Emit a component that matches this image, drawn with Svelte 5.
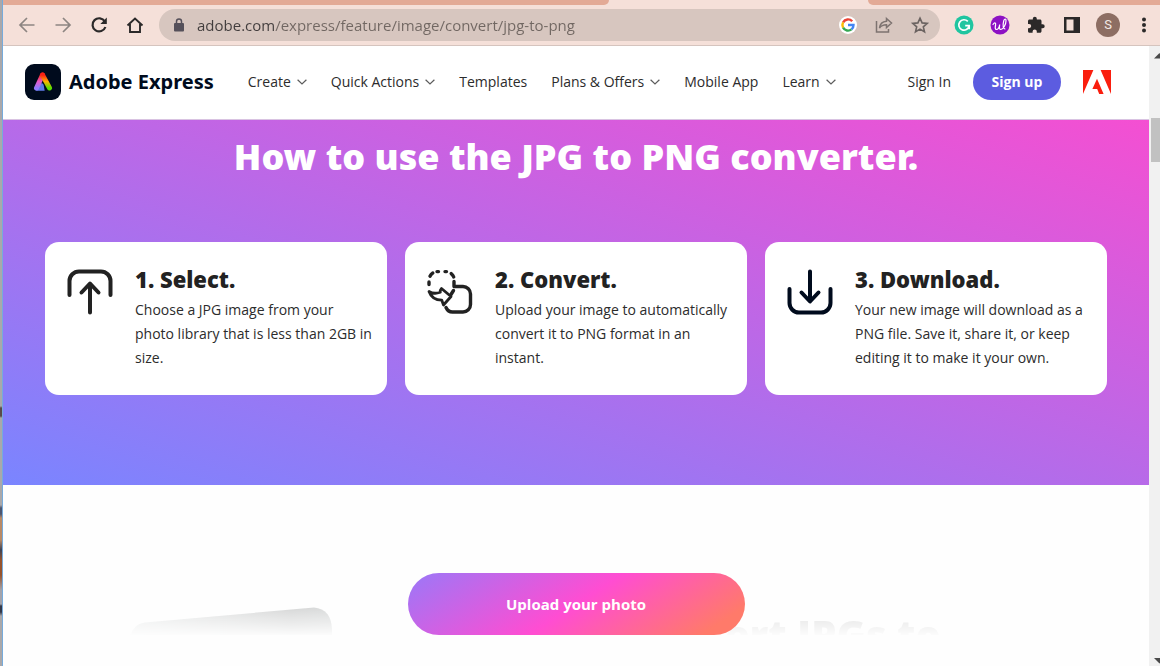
<script lang="ts">
  interface NavItem {
    label: string;
    menu?: boolean;
  }

  interface Step {
    icon: 'select' | 'convert' | 'download';
    title: string;
    text: string;
  }

  const nav: NavItem[] = [
    { label: 'Create', menu: true },
    { label: 'Quick Actions', menu: true },
    { label: 'Templates' },
    { label: 'Plans & Offers', menu: true },
    { label: 'Mobile App' },
    { label: 'Learn', menu: true },
  ];

  const steps: Step[] = [
    {
      icon: 'select',
      title: '1. Select.',
      text: 'Choose a JPG image from your photo library that is less than 2GB in size.',
    },
    {
      icon: 'convert',
      title: '2. Convert.',
      text: 'Upload your image to automatically convert it to PNG format in an instant.',
    },
    {
      icon: 'download',
      title: '3. Download.',
      text: 'Your new image will download as a PNG file. Save it, share it, or keep editing it to make it your own.',
    },
  ];

  let url = $state('adobe.com/express/feature/image/convert/jpg-to-png');
</script>

<div class="window">
  <div class="tabs"><span class="tab-left"></span><span class="tab-right"></span></div>

  <div class="toolbar">
    <button type="button" class="tool" aria-label="Back">
      <svg width="24" height="24" viewBox="0 0 24 24" fill="none" stroke="#8d8582" stroke-width="1.7">
        <path d="M19.500 12H5.500M12 5L5 12l7 7" />
      </svg>
    </button>
    <button type="button" class="tool" aria-label="Forward">
      <svg width="24" height="24" viewBox="0 0 24 24" fill="none" stroke="#8d8582" stroke-width="1.7">
        <path d="M4.500 12h14M12 5l7 7-7 7" />
      </svg>
    </button>
    <button type="button" class="tool" aria-label="Reload">
      <svg width="24" height="24" viewBox="0 0 24 24" fill="none" stroke="#2b2929" stroke-width="2.200">
        <path d="M17.800 8.400A6.600 6.600 0 1 0 18.400 14" />
        <path d="M19.800 4.500v6.500h-6.500z" fill="#2b2929" stroke="none" />
      </svg>
    </button>
    <button type="button" class="tool" aria-label="Home">
      <svg width="24" height="24" viewBox="0 0 24 24" fill="none" stroke="#2b2929" stroke-width="1.900">
        <path d="M4.500 12.500L12 5.500l7.500 7M7 11v8h10v-8" />
      </svg>
    </button>

    <div class="omnibox">
      <svg width="12" height="16" viewBox="0 0 12 16" aria-hidden="true">
        <path d="M3.500 7V4.500a2.500 2.500 0 0 1 5 0V7" fill="none" stroke="#55505a" stroke-width="1.500" />
        <rect x="1" y="6" width="10" height="8.500" rx="1" fill="#55505a" />
      </svg>
      <input type="text" class="url" aria-label="Address" spellcheck={false} bind:value={url} />
      <button type="button" class="tool" aria-label="Search with Google">
        <svg width="24" height="24" viewBox="0 0 24 24" fill="none" stroke-width="2.400">
          <circle cx="12" cy="12" r="9" fill="#fff" />
          <path d="M16.200 8.300A5.600 5.600 0 0 0 7.100 9.300" stroke="#ea4335" />
          <path d="M7.100 9.300a5.600 5.600 0 0 0 0 5.400" stroke="#fbbc05" />
          <path d="M7.100 14.700a5.600 5.600 0 0 0 8.400 1.700" stroke="#34a853" />
          <path d="M15.500 16.400a5.600 5.600 0 0 0 2-4.400H12" stroke="#4285f4" />
        </svg>
      </button>
      <button type="button" class="tool" aria-label="Share this page">
        <svg width="24" height="24" viewBox="0 0 24 24" fill="none" stroke="#7d7370" stroke-width="1.500">
          <path d="M4.500 8v11h12v-3" />
          <path d="M14.500 5.500l5 4.500-5 4.500v-2.700c-3.500 0-5.500 1-7 3.200.5-4 3-6.500 7-6.800z" />
        </svg>
      </button>
      <button type="button" class="tool" aria-label="Bookmark this page">
        <svg width="24" height="24" viewBox="0 0 24 24" fill="none" stroke="#6b6361" stroke-width="1.600">
          <path d="M12 5.200l2.100 4.700 5.100.5-3.900 3.400 1.200 5-4.500-2.700-4.500 2.700 1.200-5-3.900-3.400 5.100-.5z" />
        </svg>
      </button>
    </div>

    <button type="button" class="tool" aria-label="Grammarly">
      <svg width="24" height="24" viewBox="0 0 24 24" fill="none" stroke="#fff" stroke-width="1.700">
        <circle cx="12" cy="12" r="9.500" fill="#20c5a0" stroke="none" />
        <path d="M15.800 8.400a5.200 5.200 0 1 0 1.300 4.600M13.200 12.700h4v3.500" />
      </svg>
    </button>
    <button type="button" class="tool" aria-label="Wordtune">
      <svg width="24" height="24" viewBox="0 0 24 24" fill="none" stroke="#fff" stroke-width="1.200" stroke-linecap="round">
        <circle cx="12" cy="12" r="9.500" fill="#8d12c4" stroke="none" />
        <path d="M5 11.500c1.500-2.500 3-2 2.600.5-.6 2.500-.6 4.500.8 4.500 1.600 0 2.900-2.500 3.300-5-.5 2.800-.4 5 1.200 5 2.600 0 5.100-5.500 5.100-8.800 0-2.400-1.700-2.200-2.300.3-.7 3-1 7 1.200 8" />
      </svg>
    </button>
    <button type="button" class="tool" aria-label="Extensions">
      <svg width="24" height="24" viewBox="0 0 24 24" fill="#2b2929">
        <path d="M18.700 11.300h-1.200V8c0-.9-.7-1.500-1.500-1.500h-3.200V5.800a2 2 0 0 0-4 0v.7H5.500C4.700 6.500 4 7.100 4 8v3h1.100a2 2 0 0 1 0 4.200H4v3.100c0 .8.700 1.500 1.500 1.500h3.100v-1.200a2.100 2.100 0 0 1 4.200 0v1.200H16c.8 0 1.500-.7 1.500-1.500v-3h1.200a2 2 0 0 0 0-4z" />
      </svg>
    </button>
    <button type="button" class="tool" aria-label="Side panel">
      <svg width="24" height="24" viewBox="0 0 24 24" fill="#2b2929">
        <path d="M4 4h16v16H4zM6.500 6.500v11h7v-11z" fill-rule="evenodd" />
      </svg>
    </button>
    <button type="button" class="avatar" aria-label="Profile">S</button>
    <button type="button" class="tool" aria-label="Browser menu">
      <svg width="24" height="24" viewBox="0 0 24 24" fill="#2b2929">
        <circle cx="12" cy="6.500" r="2" /><circle cx="12" cy="12" r="2" /><circle cx="12" cy="17.500" r="2" />
      </svg>
    </button>
  </div>

  <div class="viewport">
    <div class="page">
      <header>
        <a class="brand" href="#home">
          <svg width="36" height="36" viewBox="0 0 36 36" fill="none" stroke-linecap="round" aria-hidden="true">
            <defs>
              <linearGradient id="leg-left" x1="0" y1="0" x2="0" y2="1">
                <stop offset="0" stop-color="#fb2a1c" />
                <stop offset=".5" stop-color="#e558c8" />
                <stop offset="1" stop-color="#8f7bff" />
              </linearGradient>
              <linearGradient id="leg-right" x1="0" y1="0" x2="0" y2="1">
                <stop offset="0" stop-color="#fb2015" />
                <stop offset=".5" stop-color="#ffb000" />
                <stop offset="1" stop-color="#58e000" />
              </linearGradient>
            </defs>
            <rect width="36" height="36" rx="9" fill="#000b1d" />
            <path d="M12 24.500h5l-.5-3" stroke="#5d7be8" stroke-width="4.500" />
            <path d="M17.500 11L11.500 24" stroke="url(#leg-left)" stroke-width="5" />
            <path d="M17.500 11l7 13" stroke="url(#leg-right)" stroke-width="5" />
          </svg>
          <span>Adobe Express</span>
        </a>
        <nav>
          {#each nav as item}
            {#if item.menu}
              <button type="button" class="nav-item">
                {item.label}
                <svg width="10" height="6" viewBox="0 0 10 6" fill="none" stroke="#5c5c5c" stroke-width="1.200" aria-hidden="true">
                  <path d="M.6.700L5 5 9.400.700" />
                </svg>
              </button>
            {:else}
              <a class="nav-item" href="#{item.label}">{item.label}</a>
            {/if}
          {/each}
        </nav>
        <a class="nav-item sign-in" href="#sign-in">Sign In</a>
        <button type="button" class="sign-up">Sign up</button>
        <a class="adobe" href="#adobe" aria-label="Adobe">
          <svg width="28" height="24" viewBox="0 0 28 24" fill="#fa1e0e">
            <path d="M0 0h10.400L0 24zM17.600 0H28v24zM14 8.800L20.600 24h-4.400l-2-4.900H9.400z" />
          </svg>
        </a>
      </header>

      <section class="hero">
        <h1>How to use the JPG to PNG converter.</h1>
        <div class="steps">
          {#each steps as step}
            <article>
              <svg class="step-icon" width="46" height="46" viewBox="0 0 46 46" fill="none" stroke="#222" stroke-width="4" stroke-linecap="round" stroke-linejoin="round" aria-hidden="true">
                {#if step.icon === 'select'}
                  <path d="M2.500 26V12a9.500 9.500 0 0 1 9.500-9.500h22A9.500 9.500 0 0 1 43.500 12v14M23 43.500V15M14.500 23.500L23 14.500l8.500 9" />
                {:else if step.icon === 'convert'}
                  <path d="M2 15.500v-2.500M3 7.300Q4 5 5.800 4M10 2.600h1.500M18 2.600h1.500M24.200 4.600Q26 6 26.700 8M27 12.500v5h9a7.500 7.500 0 0 1 7.500 7.500v10.500a7.500 7.500 0 0 1-7.500 7.500H25.500q-4.500 0-6.500-4.500M26.500 21.500l-2.500 4" stroke-width="3.400" />
                  <path d="M14.500 19.500l9.500 8-7.500 8.500-1.700-4.800Q5 31 2 22.500q5 3 11.300.8-.6-2 1.200-3.800z" stroke-width="2.800" />
                {:else}
                  <path d="M2.500 20v14a9.500 9.500 0 0 0 9.500 9.500h22a9.500 9.500 0 0 0 9.500-9.500V20M23 2.500V31M14.500 23.500L23 32.500l8.500-9" stroke="#000b1d" />
                {/if}
              </svg>
              <div>
                <h2>{step.title}</h2>
                <p>{step.text}</p>
              </div>
            </article>
          {/each}
        </div>
      </section>

      <section class="upload">
        <div class="teaser">
          <svg width="202" height="30" viewBox="0 0 202 30" aria-hidden="true">
            <defs>
              <linearGradient id="sheet">
                <stop offset="0" stop-color="#ebeded" />
                <stop offset=".8" stop-color="#d0d1d1" />
                <stop offset="1" stop-color="#d4d6d6" />
              </linearGradient>
            </defs>
            <path d="M0 30Q3 17 15 15.500L184 .5Q201 2 202 22v8z" fill="url(#sheet)" />
          </svg>
          <h2>Convert JPGs to</h2>
        </div>
        <button type="button" class="upload-button">Upload your photo</button>
      </section>
    </div>

    <div class="scrollbar">
      <svg width="6" height="6" viewBox="0 0 6 6" fill="#4a4a4a" aria-hidden="true"><path d="M0 5.500L5.500 0 11 5.500z" /></svg>
      <span class="thumb"></span>
      <svg width="6" height="6" viewBox="0 0 6 6" fill="#4a4a4a" aria-hidden="true"><path d="M0 0h11L5.500 5.500z" /></svg>
    </div>
  </div>
</div>

<style>
  :global(body) {
    margin: 0;
    background: linear-gradient(
      #aaa8aa 0 406px,
      #5a4a48 408px 416px,
      #aaa8aa 418px 505px,
      #4c5670 508px 514px,
      #b98a66 518px 540px,
      #3d4254 550px,
      #96532c 560px 575px,
      #a3a3ab 590px 604px,
      #34394a 606px 612px,
      #aaa8aa 616px
    );
  }

  * {
    box-sizing: border-box;
  }

  button {
    border: 0;
    padding: 0;
    background: none;
    font: inherit;
    color: inherit;
    cursor: pointer;
  }

  a {
    color: inherit;
    text-decoration: none;
  }

  svg {
    display: block;
    flex-shrink: 0;
  }

  .window {
    display: flex;
    flex-direction: column;
    min-height: 100vh;
    margin-left: 2px;
    border-left: 1px solid #76abdc;
    background: #fff;
    color: #2c2c2c;
    font-family: 'Open Sans', 'Noto Sans', sans-serif;
  }

  .tabs {
    display: grid;
    grid-template-columns: 606fr 292fr;
    column-gap: 259px;
    height: 5px;
    background: #f5e0d9;
  }

  .tab-left,
  .tab-right {
    background: #e3aa96;
  }

  .tab-left {
    border-bottom-right-radius: 5px;
  }

  .tab-right {
    border-bottom-left-radius: 5px;
  }

  .toolbar {
    display: flex;
    align-items: center;
    gap: 12px;
    height: 41px;
    padding: 0 4px 0 12px;
    background: #f5e0d9;
    border-bottom: 1px solid #d5c4be;
  }

  .tool {
    flex: 0 0 24px;
    height: 24px;
  }

  .omnibox {
    flex: 1;
    display: flex;
    align-items: center;
    gap: 12px;
    min-width: 0;
    height: 32px;
    padding: 0 8px 0 14px;
    border-radius: 16px;
    background: #d7c6bf;
  }

  .url {
    flex: 1;
    min-width: 0;
    padding: 0;
    border: 0;
    outline: 0;
    background: linear-gradient(90deg, #423d3d 77px, #716762 77px);
    background-clip: text;
    color: transparent;
    caret-color: #423d3d;
    font: 15px/24px 'Open Sans', 'Noto Sans', sans-serif;
  }

  .avatar {
    flex: 0 0 24px;
    height: 24px;
    border-radius: 50%;
    background: #8d6e63;
    color: #f3e9e5;
    font: 13px/24px Roboto, sans-serif;
  }

  .viewport {
    flex: 1;
    display: flex;
  }

  .page {
    flex: 1;
    display: flex;
    flex-direction: column;
    min-width: 0;
  }

  header {
    display: flex;
    align-items: center;
    height: 74px;
    padding: 0 38px 2px 22px;
    border-bottom: 1px solid #d9c3e2;
  }

  .brand {
    display: flex;
    align-items: center;
    gap: 8px;
    color: #000b1d;
    font-family: 'Noto Sans', 'Open Sans', sans-serif;
    font-size: 20px;
    font-weight: 700;
    white-space: nowrap;
  }

  nav {
    display: flex;
    gap: 24px;
    margin-left: 34px;
  }

  .nav-item {
    display: flex;
    align-items: center;
    gap: 6px;
    font-size: 14px;
    line-height: 20px;
    white-space: nowrap;
  }

  .sign-in {
    margin-left: auto;
  }

  .sign-up {
    width: 88px;
    height: 36px;
    margin: 0 22px;
    border-radius: 18px;
    background: #5c5ce0;
    color: #fff;
    font-size: 14px;
    font-weight: 700;
  }

  .hero {
    padding: 13px 40px 90px;
    background: linear-gradient(to top right, #7a85ff, #f44fd2);
  }

  h1,
  h2,
  p {
    margin: 0;
  }

  h1,
  h2 {
    font-family: 'Noto Sans', 'Open Sans', sans-serif;
    font-weight: 900;
  }

  h1 {
    color: #fff;
    font-size: 36px;
    line-height: 48px;
    text-align: center;
  }

  .steps {
    display: grid;
    grid-template-columns: repeat(3, 1fr);
    gap: 18px;
    max-width: 1062px;
    margin: 61px auto 0;
  }

  article {
    display: flex;
    gap: 22px;
    padding: 24px 12px 25px 22px;
    border-radius: 14px;
    background: #fff;
  }

  .step-icon {
    margin-top: 3px;
  }

  article h2 {
    font-size: 22px;
    line-height: 26px;
    color: #222;
  }

  article p {
    margin-top: 6px;
    font-size: 14px;
    line-height: 24px;
  }

  .upload {
    flex: 1;
    display: grid;
    grid-template-rows: 62px;
    align-content: start;
    justify-items: center;
    padding: 88px 0 31px;
    background: #fefefe;
  }

  .teaser,
  .upload-button {
    grid-area: 1 / 1;
  }

  .teaser {
    display: flex;
    align-items: flex-start;
    justify-content: space-between;
    width: 100%;
    height: 62px;
    padding: 34px 208px 0 127px;
    overflow: hidden;
    mask-image: linear-gradient(transparent 30px, #000 30px, transparent 64px);
  }

  .teaser h2 {
    color: #dcdcdc;
    font-size: 40px;
    line-height: 56px;
    white-space: nowrap;
  }

  .upload-button {
    z-index: 1;
    width: 337px;
    height: 62px;
    border-radius: 31px;
    background: linear-gradient(147deg, #9a78f8, #ff4dd2 50%, #ff7a6a 90%);
    color: #fff;
    font-size: 15px;
    font-weight: 700;
  }

  .scrollbar {
    flex: 0 0 11px;
    display: flex;
    flex-direction: column;
    align-items: flex-end;
    padding: 7px 0 2px;
    background: #f1f1f1;
    overflow: hidden;
  }

  .thumb {
    width: 9px;
    height: 44px;
    margin: 59px 0 auto;
    background: #c1c1c1;
  }
</style>
